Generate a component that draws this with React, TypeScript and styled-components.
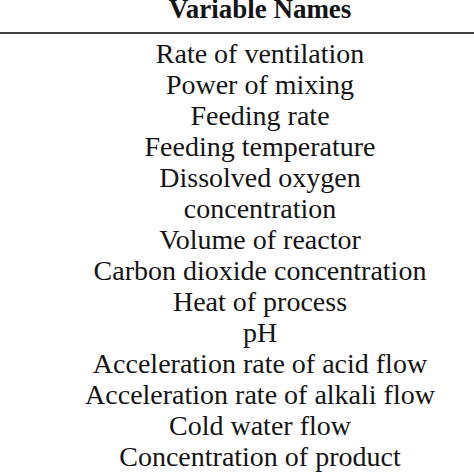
import React from "react";
import styled, { createGlobalStyle } from "styled-components";

const variableNames = [
  "Rate of ventilation",
  "Power of mixing",
  "Feeding rate",
  "Feeding temperature",
  "Dissolved oxygen",
  "concentration",
  "Volume of reactor",
  "Carbon dioxide concentration",
  "Heat of process",
  "pH",
  "Acceleration rate of acid flow",
  "Acceleration rate of alkali flow",
  "Cold water flow",
  "Concentration of product",
];

const GlobalStyle = createGlobalStyle`
  html, body {
    margin: 0;
    padding: 0;
    background: #ffffff;
    overflow: hidden;
  }
`;

const App = () => {
  return (
    <>
      <GlobalStyle />
      <Table>
        <HeaderCell>Variable Names</HeaderCell>
        <Body>
          {variableNames.map((name, idx) => (
            <Row key={idx}>{name}</Row>
          ))}
        </Body>
      </Table>
    </>
  );
};

export default App;

const Table = styled.div`
  width: 474px;
  height: 474px;
  display: flex;
  flex-direction: column;
  font-family: "Liberation Serif", "Times New Roman", serif;
  color: #141414;
  overflow: hidden;
`;

const HeaderCell = styled.div`
  margin-top: -8px;
  padding-bottom: 6px;
  padding-left: 46px;
  text-align: center;
  font-weight: bold;
  font-size: 27px;
  line-height: 34px;
  border-bottom: 2px solid #404040;
`;

const Body = styled.div`
  display: flex;
  flex-direction: column;
  padding-top: 4px;
  padding-left: 46px;
`;

const Row = styled.div`
  text-align: center;
  font-size: 28px;
  line-height: 31px;
  white-space: nowrap;
`;
